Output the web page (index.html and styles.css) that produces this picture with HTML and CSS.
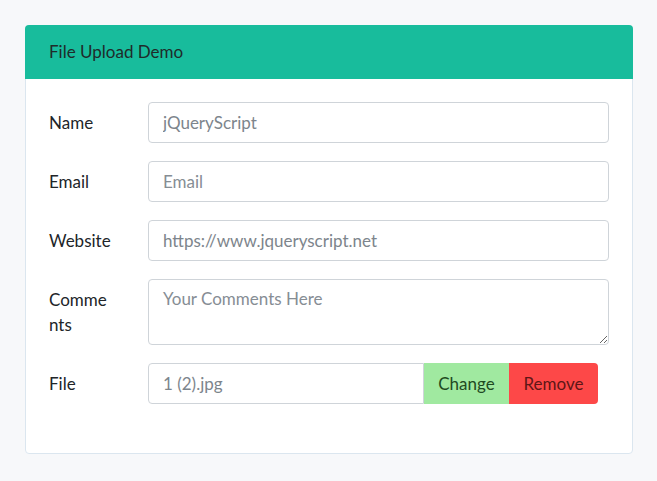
FILE: index.html
```html
<!DOCTYPE html>
<html lang="en">
<head>
<meta charset="utf-8">
<title>File Upload Demo</title>
<link rel="stylesheet" href="styles.css">
</head>
<body>
<div class="page">
  <div class="card">
    <div class="card-header">File Upload Demo</div>
    <form class="card-body">
      <div class="row">
        <label class="label">Name</label>
        <input class="field" type="text" value="jQueryScript">
      </div>
      <div class="row">
        <label class="label">Email</label>
        <input class="field" type="text" placeholder="Email">
      </div>
      <div class="row">
        <label class="label">Website</label>
        <input class="field" type="text" value="https://www.jqueryscript.net">
      </div>
      <div class="row">
        <label class="label">Comments</label>
        <textarea class="field area" placeholder="Your Comments Here"></textarea>
      </div>
      <div class="row">
        <label class="label">File</label>
        <div class="file-group">
          <input class="field file-name" type="text" value="1 (2).jpg">
          <button type="button" class="btn btn-change">Change</button>
          <button type="button" class="btn btn-remove">Remove</button>
        </div>
      </div>
    </form>
  </div>
</div>
</body>
</html>
```
FILE: styles.css
```css
* { box-sizing: border-box; }
html, body { margin: 0; padding: 0; }
body {
  background: #f7f8fa;
  font-family: Lato, "Open Sans", Arial, sans-serif;
  font-size: 17px;
  line-height: 25px;
  color: #212529;
}
.page {
  padding: 25px 24px 0 25px;
}
.card {
  width: 608px;
  background: #fff;
  border: 1px solid #dbe6ef;
  border-radius: 4px;
}
.card-header {
  margin: -1px -1px 0;
  height: 54px;
  padding: 14px 24px;
  background: #18bc9c;
  color: #1f2b2a;
  border-radius: 4px 4px 0 0;
}
.card-body {
  margin: 0;
  padding: 23px 23px 49px;
  display: flex;
  flex-direction: column;
  gap: 18px;
}
.row {
  display: flex;
  align-items: flex-start;
}
.label {
  width: 99px;
  flex: none;
  padding: 8px 37px 0 0;
  overflow-wrap: anywhere;
  color: #212529;
}
.field {
  flex: 1;
  min-width: 0;
  height: 41px;
  margin: 0;
  padding: 0 14px;
  border: 1px solid #cfd4d9;
  border-radius: 4px;
  font-family: inherit;
  font-size: 17px;
  color: #7d858c;
  background: #fff;
  outline: none;
}
.field::placeholder { color: #868d94; opacity: 1; }
.area {
  height: 66px;
  padding: 6px 14px;
  line-height: 25px;
  resize: vertical;
}
.file-group {
  display: flex;
  flex: none;
  width: 450px;
}
.file-name {
  width: 276px;
  flex: none;
  border-radius: 4px 0 0 4px;
}
.btn {
  height: 41px;
  border: 0;
  margin: 0;
  font-family: inherit;
  font-size: 17px;
  cursor: pointer;
}
.btn-change {
  width: 85px;
  background: #a0e9a0;
  color: #1f4a22;
}
.btn-remove {
  width: 89px;
  background: #fd4848;
  color: #5e1616;
  border-radius: 0 4px 4px 0;
}
```
